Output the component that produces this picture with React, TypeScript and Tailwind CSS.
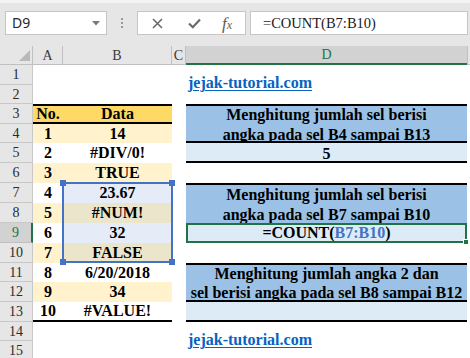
import React from "react";

const serif = "font-['Liberation_Serif','Times_New_Roman',serif]";

const heights: Record<number, string> = {
  17: "h-[17px]",
  19: "h-[19px]",
  20: "h-[20px]",
};

type Row = {
  n: number;
  h: number;
  a?: string;
  b?: string;
  kind?: "head" | "alt" | "plain" | "last";
  sel?: "blue" | "tan";
};

const rows: Row[] = [
  { n: 1, h: 20 },
  { n: 2, h: 19 },
  { n: 3, h: 20, a: "No.", b: "Data", kind: "head" },
  { n: 4, h: 19, a: "1", b: "14", kind: "alt" },
  { n: 5, h: 20, a: "2", b: "#DIV/0!", kind: "plain" },
  { n: 6, h: 20, a: "3", b: "TRUE", kind: "alt" },
  { n: 7, h: 20, a: "4", b: "23.67", kind: "plain", sel: "blue" },
  { n: 8, h: 20, a: "5", b: "#NUM!", kind: "alt", sel: "tan" },
  { n: 9, h: 20, a: "6", b: "32", kind: "plain", sel: "blue" },
  { n: 10, h: 20, a: "7", b: "FALSE", kind: "alt", sel: "tan" },
  { n: 11, h: 19, a: "8", b: "6/20/2018", kind: "plain" },
  { n: 12, h: 20, a: "9", b: "34", kind: "alt" },
  { n: 13, h: 20, a: "10", b: "#VALUE!", kind: "last" },
  { n: 14, h: 19 },
  { n: 15, h: 19 },
];

function Toolbar() {
  return (
    <div className="h-[46px] bg-[#e6e6e6] border-t-[3px] border-[#f3f3f3] flex items-start pt-[8px]">
      {/* Name box */}
      <div className="ml-[5px] w-[102px] h-[24px] bg-white border border-[#c6c6c6] flex items-center justify-between pl-[6px] pr-[6px]">
        <span className="font-['Noto_Sans',sans-serif] text-[14px] text-[#262626] leading-none">D9</span>
        <svg width="8" height="5" viewBox="0 0 8 5">
          <path d="M0 0 L8 0 L4 4.5 Z" fill="#7a7a7a" />
        </svg>
      </div>
      {/* dots */}
      <div className="ml-[14px] mt-[7px] w-[3px] flex flex-col gap-[2px]">
        <span className="w-[2px] h-[2px] bg-[#9a9a9a]" />
        <span className="w-[2px] h-[2px] bg-[#9a9a9a]" />
        <span className="w-[2px] h-[2px] bg-[#9a9a9a]" />
      </div>
      {/* formula buttons */}
      <div className="ml-[13px] w-[109px] h-[24px] bg-white border border-[#c6c6c6] flex items-center">
        <svg className="ml-[14px]" width="11" height="11" viewBox="0 0 11 11">
          <path d="M1 1 L10 10 M10 1 L1 10" stroke="#6b6b6b" strokeWidth="1.6" />
        </svg>
        <svg className="ml-[25px]" width="13" height="11" viewBox="0 0 13 11">
          <path d="M1 5.5 L4.8 9.2 L12 1.5" stroke="#6b6b6b" strokeWidth="2.2" fill="none" />
        </svg>
        <span className={`ml-[21px] ${serif} italic text-[17px] text-[#5a5a5a] leading-none`}>
          f<span className="text-[12px]">x</span>
        </span>
      </div>
      {/* formula input */}
      <div className="ml-[4px] mr-[2px] flex-1 h-[24px] bg-white border border-[#c6c6c6] flex items-center pl-[12px]">
        <span className={`${serif} text-[14.5px] text-[#1a1a1a] leading-none`}>=COUNT(B7:B10)</span>
      </div>
    </div>
  );
}

function ColumnHeaders() {
  const cell = `${serif} text-[14px] text-[#3a3a3a] flex items-center justify-center border-r border-b border-[#c0c0c0]`;
  return (
    <div className="flex h-[19px] bg-[#e6e6e6]">
      <div className="relative w-[33px] border-r border-b border-[#c0c0c0]">
        <svg className="absolute right-[2px] bottom-[3px]" width="11" height="11" viewBox="0 0 11 11">
          <path d="M11 0 L11 11 L0 11 Z" fill="#b9b9b9" />
        </svg>
      </div>
      <div className={`w-[30px] ${cell}`}>A</div>
      <div className={`w-[109px] ${cell}`}>B</div>
      <div className={`w-[14px] ${cell}`}>C</div>
      <div className={`w-[281px] ${serif} text-[14px] text-[#217346] bg-[#d2d2d2] flex items-center justify-center border-b-2 border-[#217346]`}>
        D
      </div>
      <div className="flex-1 border-l border-b border-[#c0c0c0]" />
    </div>
  );
}

function RowHeaders() {
  return (
    <div className="w-[33px] flex flex-col">
      {rows.map((r) =>
        r.n === 9 ? (
          <div
            key={r.n}
            className={`${heights[r.h]} bg-[#d2d2d2] border-r-2 border-[#217346] border-b border-b-[#c0c0c0] flex items-center justify-center ${serif} text-[14px] text-[#217346]`}
          >
            {r.n}
          </div>
        ) : (
          <div
            key={r.n}
            className={`${heights[r.h]} bg-[#e6e6e6] border-r border-b border-[#c8c8c8] flex items-center justify-center ${serif} text-[14px] text-[#2b2b2b]`}
          >
            {r.n}
          </div>
        )
      )}
    </div>
  );
}

function DataTable() {
  return (
    <div className={`relative w-[139px] flex flex-col ${serif} text-[16px] font-bold leading-[20px] text-black`}>
      {rows.map((r) => {
        let rowCls = "";
        if (r.kind === "head") rowCls = "bg-[#ffd966] border-y-2 border-black";
        else if (r.kind === "alt") rowCls = "bg-[#fff2cc]";
        else if (r.kind === "last") rowCls = "border-b-2 border-black";
        let bCls = "";
        if (r.sel === "blue") bCls = "bg-[#e5ecf7]";
        if (r.sel === "tan") bCls = "bg-[#ebe5cc]";
        return (
          <div key={r.n} className={`${heights[r.h]} flex ${rowCls}`}>
            <div className="w-[30px] flex items-center justify-center">{r.a}</div>
            <div className={`w-[109px] flex items-center justify-center ${bCls}`}>{r.b}</div>
          </div>
        );
      })}
      {/* range highlight B7:B10 */}
      <div className="absolute left-[29px] top-[117px] w-[111px] h-[81px] border-2 border-[#4472c4]">
        <span className="absolute -left-[4px] -top-[4px] w-[6px] h-[6px] bg-[#4472c4]" />
        <span className="absolute -right-[4px] -top-[4px] w-[6px] h-[6px] bg-[#4472c4]" />
        <span className="absolute -left-[4px] -bottom-[4px] w-[6px] h-[6px] bg-[#4472c4]" />
        <span className="absolute -right-[4px] -bottom-[4px] w-[6px] h-[6px] bg-[#4472c4]" />
      </div>
    </div>
  );
}

function ColumnD() {
  const link = "text-[#0563c1] underline decoration-1 underline-offset-2";
  return (
    <div className={`w-[281px] flex flex-col ${serif} text-[16px] font-bold text-black`}>
      <div className="h-[39px] flex items-center pl-[2px] pb-[4px]">
        <span className={link}>jejak-tutorial.com</span>
      </div>
      <div className="h-[39px] bg-[#9bc2e6] border-y-2 border-black flex flex-col items-center justify-center pt-[3px] leading-[20px]">
        <span>Menghitung jumlah sel berisi</span>
        <span>angka pada sel B4 sampai B13</span>
      </div>
      <div className="h-[20px] bg-[#ddebf7] border-b-2 border-black flex items-center justify-center pt-[3px] leading-[20px]">
        5
      </div>
      <div className="h-[20px]" />
      <div className="h-[40px] bg-[#9bc2e6] border-t-2 border-black flex flex-col items-center justify-center pt-[2px] leading-[20px]">
        <span>Menghitung jumlah sel berisi</span>
        <span>angka pada sel B7 sampai B10</span>
      </div>
      <div className="relative h-[20px] bg-[#ddebf7] border-2 border-[#217346] flex items-center justify-center leading-[20px]">
        <span>
          =COUNT(<span className="text-[#4472c4]">B7:B10</span>)
        </span>
        <span className="absolute -right-[4px] -bottom-[4px] w-[6px] h-[6px] bg-[#217346] border border-white" />
      </div>
      <div className="h-[20px]" />
      <div className="h-[39px] bg-[#9bc2e6] border-y-2 border-black flex flex-col items-center justify-center leading-[19px]">
        <span>Menghitung jumlah angka 2 dan</span>
        <span>sel berisi angka pada sel B8 sampai B12</span>
      </div>
      <div className="h-[20px] bg-[#ddebf7] border-b-2 border-black" />
      <div className="h-[38px] flex items-center pl-[2px] pb-[2px]">
        <span className={link}>jejak-tutorial.com</span>
      </div>
    </div>
  );
}

export default function App() {
  return (
    <div className="w-[470px] h-[358px] overflow-hidden bg-white">
      <Toolbar />
      <ColumnHeaders />
      <div className="flex">
        <RowHeaders />
        <DataTable />
        <div className="w-[14px]" />
        <ColumnD />
        <div className="flex-1" />
      </div>
    </div>
  );
}
